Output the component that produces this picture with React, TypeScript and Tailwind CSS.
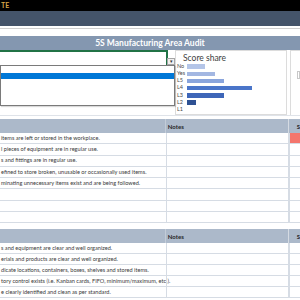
const rowsA = [
  "items are left or stored in the workplace.",
  "l pieces of equipment are in regular use.",
  "s and fittings are in regular use.",
  "efined to store broken, unusable or occasionally used items.",
  "minating unnecessary items exist and are being followed.",
  "",
  "",
  "",
];

const rowsB = [
  "s and equipment are clear and well organized.",
  "erials and products are clear and well organized.",
  "dicate locations, containers, boxes, shelves and stored items.",
  "tory control exists (i.e. Kanban cards, FIFO, minimum/maximum, etc.).",
  "e clearly identified and clean as per standard.",
];

const bars = [
  { label: "No", w: 18, color: "bg-[#b4c5e8]" },
  { label: "Yes", w: 28, color: "bg-[#a3b7e2]" },
  { label: "L5", w: 37, color: "bg-[#8aa5dc]" },
  { label: "L4", w: 65, color: "bg-[#4a75c9]" },
  { label: "L3", w: 37, color: "bg-[#3e66b8]" },
  { label: "L2", w: 9, color: "bg-[#2e5193]" },
  { label: "L1", w: 0, color: "bg-[#24417a]" },
];

function AuditTable({ rows, tall, flag }: { rows: string[]; tall: boolean; flag: boolean }) {
  return (
    <div>
      <div className="flex h-[14px] bg-[#acb9ca] text-[6px] font-bold text-[#262626]">
        <div className="w-[166px] border-r border-[#c3ccd8]" />
        <div className="flex w-[122px] items-center pl-[2px]">Notes</div>
        <div className="flex flex-1 items-center border-l border-[#d5dbe3] pl-[8px]">S</div>
      </div>
      {rows.map((text, i) => (
        <div
          key={i}
          className={`flex border-b border-[#d6dce4] ${tall ? "h-[11.25px]" : "h-[11px]"}`}
        >
          <div className="flex w-[166px] items-center whitespace-nowrap pl-px text-[5.6px] text-[#3a3a3a]">
            {text}
          </div>
          <div className="w-[122px] border-l border-[#d6dce4]" />
          <div
            className={`flex-1 border-l-2 border-[#d6dce4] ${flag && i === 0 ? "bg-[#f4766d]" : ""}`}
          />
        </div>
      ))}
    </div>
  );
}

export default function App() {
  return (
    <div className="h-[300px] w-[300px] overflow-hidden bg-white font-['Lato',sans-serif]">
      <div className="flex h-[11px] items-center bg-black pl-px">
        <span className="text-[7px] font-bold tracking-wide text-[#d5a448]">TE</span>
      </div>
      <div className="h-[15px] bg-[#44546a]" />
      <div className="h-[10px] pt-[2px]">
        <div className="border-t border-[#cfcfcf]" />
      </div>
      <div className="flex h-[14px] items-center justify-center bg-[#8497b0] text-[8.5px] font-bold text-white">
        5S Manufacturing Area Audit
      </div>

      <div className="relative flex h-[65px]">
        <div className="relative w-[175px]">
          <div className="h-[15px] w-[168px] border-r-2 border-t-2 border-[#217346]" />
          <div className="absolute left-[167px] top-[8px] flex h-[7px] w-[8px] items-center justify-center border border-[#a6a6a6] bg-[#f0f0f0] text-[5px] leading-none text-[#333]">
            ▾
          </div>
          <div className="absolute left-0 top-[15px] z-10 h-[41px] w-[175px] border border-[#7a7a7a] bg-white pt-[7px] shadow-[1px_1px_1px_rgba(0,0,0,0.15)]">
            <div className="h-[6px] bg-[#0078d7]" />
          </div>
        </div>

        <div className="w-[112px] border border-[#dcdcdc]">
          <div className="pl-[7px] pt-[3px] text-[8.5px] leading-[8px] text-[#404040]">Score share</div>
          <div className="mt-[1px]">
            {bars.map((b) => (
              <div key={b.label} className="flex h-[7.2px] items-center">
                <span className="w-[11px] pl-[1px] text-[5.5px] leading-none text-[#4a4a4a]">{b.label}</span>
                <div className={`h-[4.5px] ${b.color}`} style={{ width: b.w }} />
              </div>
            ))}
          </div>
        </div>

        <div className="ml-[3px] flex-1 border-l border-t border-[#dcdcdc] pt-[20px] pl-[6px]">
          <div className="h-[8px] border border-[#c8c8c8] bg-white" />
        </div>
      </div>

      <div className="h-[4px] border-t border-[#dfe3e9]" />
      <AuditTable rows={rowsA} tall flag />
      <div className="h-[6px]" />
      <AuditTable rows={rowsB} tall={false} flag={false} />
    </div>
  );
}
